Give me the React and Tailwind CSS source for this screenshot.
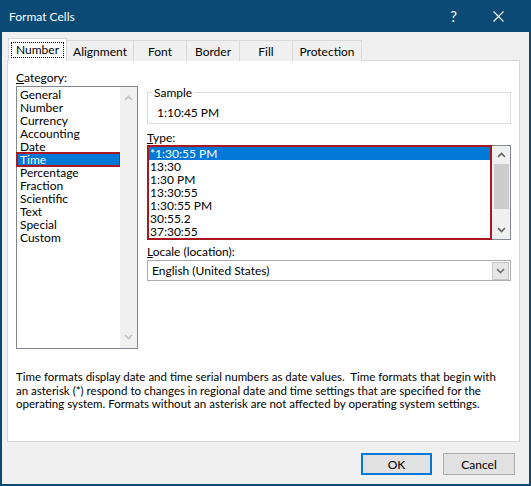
import { useState } from 'react';

const font = { fontFamily: '"Segoe UI", Lato, "Noto Sans", sans-serif' };

const tabs = ['Number', 'Alignment', 'Font', 'Border', 'Fill', 'Protection'];
const tabWidths = ['w-[59px]', 'w-[67px]', 'w-[53px]', 'w-[53px]', 'w-[53px]', 'w-[69px]'];

const categories = [
  'General',
  'Number',
  'Currency',
  'Accounting',
  'Date',
  'Time',
  'Percentage',
  'Fraction',
  'Scientific',
  'Text',
  'Special',
  'Custom',
];

const types = ['*1:30:55 PM', '13:30', '1:30 PM', '13:30:55', '1:30:55 PM', '30:55.2', '37:30:55'];

function Chevron({ up, color = '#606060' }) {
  return (
    <svg width="9" height="6" viewBox="0 0 9 6">
      <polyline
        points={up ? '1,5 4.5,1.5 8,5' : '1,1 4.5,4.5 8,1'}
        fill="none"
        stroke={color}
        strokeWidth="1.6"
      />
    </svg>
  );
}

export default function App() {
  const [category, setCategory] = useState('Time');
  const [type, setType] = useState(0);

  return (
    <div
      className="w-[531px] h-[486px] flex flex-col bg-[#f0f0f0] border-x-2 border-b-2 border-[#0a4a74] text-[12px] text-black leading-[15px]"
      style={font}
    >
      {/* title bar */}
      <div className="h-[32px] shrink-0 bg-[#0a4a74] flex items-center text-white pl-[7px]">
        <span className="flex-1">Format Cells</span>
        <span className="text-[15px] mr-[36px]">?</span>
        <svg width="11" height="11" viewBox="0 0 11 11" className="mr-[25px]">
          <path d="M0.5 0.5L10.5 10.5M10.5 0.5L0.5 10.5" stroke="white" strokeWidth="1.1" />
        </svg>
      </div>

      <div className="flex-1 flex flex-col pl-[5px] pt-[7px]">
        {/* tabs */}
        <div className="flex items-end h-[22px] ml-[1px] relative z-10 -mb-px">
          {tabs.map((t, i) =>
            i === 0 ? (
              <div
                key={t}
                className={`${tabWidths[i]} h-[23px] bg-white border border-b-0 border-[#d9d9d9] flex items-center justify-center`}
              >
                <span className="border border-dotted border-black px-[4px] leading-[14px]">{t}</span>
              </div>
            ) : (
              <div
                key={t}
                className={`${tabWidths[i]} h-[21px] bg-[#f0f0f0] border border-l-0 border-b-0 border-[#d9d9d9] flex items-center justify-center`}
              >
                {t}
              </div>
            )
          )}
        </div>

        {/* tab page */}
        <div className="w-[513px] h-[382px] bg-white border border-[#d9d9d9] flex flex-col px-[8px] pt-[9px]">
          <div className="flex gap-[9px]">
            <div className="flex flex-col">
              <div className="h-[16px]">
                <u>C</u>ategory:
              </div>
              <div className="w-[122px] h-[263px] border border-[#828790] flex">
                <div className="flex-1 pt-[1px]">
                  {categories.map((c) => (
                    <div
                      key={c}
                      onClick={() => setCategory(c)}
                      className={
                        c === category
                          ? 'h-[13px] leading-[13px] pl-[3px] bg-[#0078d7] text-white outline-2 outline-[#a8181e] -outline-offset-1'
                          : 'h-[13px] leading-[13px] pl-[3px]'
                      }
                    >
                      {c}
                    </div>
                  ))}
                </div>
                <div className="w-[17px] bg-[#f0f0f0] flex flex-col justify-between items-center py-[8px]">
                  <Chevron up color="#c0c0c0" />
                  <Chevron color="#c0c0c0" />
                </div>
              </div>
            </div>

            <div className="w-[366px] flex flex-col">
              {/* sample group */}
              <div className="h-[32px] border border-[#dcdcdc] mt-[22px] relative">
                <span className="absolute -top-[8px] left-[4px] bg-white px-[2px]">Sample</span>
                <div className="pl-[9px] pt-[13px] leading-[13px]">1:10:45 PM</div>
              </div>

              <div className="mt-[6px] h-[15px]">
                <u>T</u>ype:
              </div>
              <div className="h-[95px] flex">
                <div className="flex-1 border-2 border-[#a8181e]">
                  {types.map((t, i) => (
                    <div
                      key={t}
                      onClick={() => setType(i)}
                      className={
                        i === type
                          ? 'h-[13px] leading-[13px] pl-[1px] bg-[#0078d7] text-white'
                          : 'h-[13px] leading-[13px] pl-[1px]'
                      }
                    >
                      {t}
                    </div>
                  ))}
                </div>
                <div className="w-[19px] border border-l-0 border-[#828790] bg-[#f0f0f0] flex flex-col items-center py-[1px]">
                  <div className="h-[16px] flex items-center">
                    <Chevron up />
                  </div>
                  <div className="w-[15px] h-[45px] bg-[#cdcdcd] mt-[1px]" />
                  <div className="flex-1" />
                  <div className="h-[16px] flex items-center">
                    <Chevron />
                  </div>
                </div>
              </div>

              <div className="mt-[4px] h-[15px]">
                <u>L</u>ocale (location):
              </div>
              <div className="mt-[1px] h-[21px] border border-[#adadad] flex items-center pl-[4px] pr-[1px]">
                <span className="flex-1">English (United States)</span>
                <div className="w-[17px] h-[18px] bg-[#e5e5e5] border border-[#c6c6c6] flex items-center justify-center">
                  <Chevron color="#707070" />
                </div>
              </div>
            </div>
          </div>

          <p className="mt-[21px] w-[486px] leading-[13.5px] text-[11.5px]">
            Time formats display date and time serial numbers as date values.&nbsp; Time formats that begin with
            an asterisk (*) respond to changes in regional date and time settings that are specified for the
            operating system. Formats without an asterisk are not affected by operating system settings.
          </p>
        </div>

        {/* buttons */}
        <div className="flex justify-end gap-[11px] mt-[11px] pr-[14px]">
          <button className="w-[71px] h-[22px] bg-[#e1e1e1] border-2 border-[#0078d7]">OK</button>
          <button className="w-[72px] h-[22px] bg-[#e1e1e1] border border-[#adadad]">Cancel</button>
        </div>
      </div>
    </div>
  );
}
